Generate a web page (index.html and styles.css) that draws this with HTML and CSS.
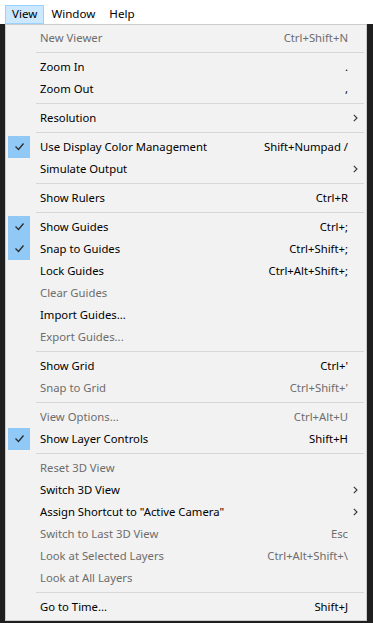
FILE: index.html
```html
<!DOCTYPE html>
<html lang="en">
<head>
    <meta charset="UTF-8">
    <meta name="viewport" content="width=device-width, initial-scale=1.0">
    <title>View Menu</title>
    <link rel="stylesheet" href="styles.css">
</head>
<body>
    <div class="menubar">
        <span class="menubar-item active">View</span>
        <span class="menubar-item">Window</span>
        <span class="menubar-item">Help</span>
    </div>
    <div class="workspace">
        <div class="menu">
            <div class="item disabled"><span class="check"></span><span class="label">New Viewer</span><span class="key">Ctrl+Shift+N</span><span class="arrow"></span></div>
            <div class="sep"></div>
            <div class="item"><span class="check"></span><span class="label">Zoom In</span><span class="key">.</span><span class="arrow"></span></div>
            <div class="item"><span class="check"></span><span class="label">Zoom Out</span><span class="key">,</span><span class="arrow"></span></div>
            <div class="sep"></div>
            <div class="item"><span class="check"></span><span class="label">Resolution</span><span class="key"></span><span class="arrow"><svg width="5" height="8" viewBox="0 0 5 8"><path d="M0.8 0.8 L4 4 L0.8 7.2"/></svg></span></div>
            <div class="sep"></div>
            <div class="item checked"><span class="check"><svg width="22" height="22" viewBox="0 0 22 22"><path d="M7.5 10.5 L10.5 13.5 L15.5 7.5"/></svg></span><span class="label">Use Display Color Management</span><span class="key">Shift+Numpad /</span><span class="arrow"></span></div>
            <div class="item"><span class="check"></span><span class="label">Simulate Output</span><span class="key"></span><span class="arrow"><svg width="5" height="8" viewBox="0 0 5 8"><path d="M0.8 0.8 L4 4 L0.8 7.2"/></svg></span></div>
            <div class="sep"></div>
            <div class="item"><span class="check"></span><span class="label">Show Rulers</span><span class="key">Ctrl+R</span><span class="arrow"></span></div>
            <div class="sep"></div>
            <div class="item checked"><span class="check"><svg width="22" height="22" viewBox="0 0 22 22"><path d="M7.5 10.5 L10.5 13.5 L15.5 7.5"/></svg></span><span class="label">Show Guides</span><span class="key">Ctrl+;</span><span class="arrow"></span></div>
            <div class="item checked"><span class="check"><svg width="22" height="22" viewBox="0 0 22 22"><path d="M7.5 10.5 L10.5 13.5 L15.5 7.5"/></svg></span><span class="label">Snap to Guides</span><span class="key">Ctrl+Shift+;</span><span class="arrow"></span></div>
            <div class="item"><span class="check"></span><span class="label">Lock Guides</span><span class="key">Ctrl+Alt+Shift+;</span><span class="arrow"></span></div>
            <div class="item disabled"><span class="check"></span><span class="label">Clear Guides</span><span class="key"></span><span class="arrow"></span></div>
            <div class="item"><span class="check"></span><span class="label">Import Guides...</span><span class="key"></span><span class="arrow"></span></div>
            <div class="item disabled"><span class="check"></span><span class="label">Export Guides...</span><span class="key"></span><span class="arrow"></span></div>
            <div class="sep"></div>
            <div class="item"><span class="check"></span><span class="label">Show Grid</span><span class="key">Ctrl+'</span><span class="arrow"></span></div>
            <div class="item disabled"><span class="check"></span><span class="label">Snap to Grid</span><span class="key">Ctrl+Shift+'</span><span class="arrow"></span></div>
            <div class="sep"></div>
            <div class="item disabled"><span class="check"></span><span class="label">View Options...</span><span class="key">Ctrl+Alt+U</span><span class="arrow"></span></div>
            <div class="item checked"><span class="check"><svg width="22" height="22" viewBox="0 0 22 22"><path d="M7.5 10.5 L10.5 13.5 L15.5 7.5"/></svg></span><span class="label">Show Layer Controls</span><span class="key">Shift+H</span><span class="arrow"></span></div>
            <div class="sep"></div>
            <div class="item disabled"><span class="check"></span><span class="label">Reset 3D View</span><span class="key"></span><span class="arrow"></span></div>
            <div class="item"><span class="check"></span><span class="label">Switch 3D View</span><span class="key"></span><span class="arrow"><svg width="5" height="8" viewBox="0 0 5 8"><path d="M0.8 0.8 L4 4 L0.8 7.2"/></svg></span></div>
            <div class="item"><span class="check"></span><span class="label">Assign Shortcut to "Active Camera"</span><span class="key"></span><span class="arrow"><svg width="5" height="8" viewBox="0 0 5 8"><path d="M0.8 0.8 L4 4 L0.8 7.2"/></svg></span></div>
            <div class="item disabled"><span class="check"></span><span class="label">Switch to Last 3D View</span><span class="key">Esc</span><span class="arrow"></span></div>
            <div class="item disabled"><span class="check"></span><span class="label">Look at Selected Layers</span><span class="key">Ctrl+Alt+Shift+\</span><span class="arrow"></span></div>
            <div class="item disabled"><span class="check"></span><span class="label">Look at All Layers</span><span class="key"></span><span class="arrow"></span></div>
            <div class="sep"></div>
            <div class="item"><span class="check"></span><span class="label">Go to Time...</span><span class="key">Shift+J</span><span class="arrow"></span></div>
        </div>
    </div>
</body>
</html>
```

FILE: styles.css
```css
* {
    margin: 0;
    padding: 0;
    box-sizing: border-box;
}

body {
    font-family: 'Noto Sans', 'Liberation Sans', sans-serif;
    font-size: 11.3px;
    background-color: #1f1f1f;
    color: #000;
    width: 373px;
    height: 623px;
    overflow: hidden;
}

.menubar {
    background: #fff;
    height: 24px;
    padding: 5px 0 0 5px;
    display: flex;
}

.menubar-item {
    height: 19px;
    line-height: 16px;
    padding: 0 6px;
    border: 1px solid transparent;
    font-size: 11.6px;
}

.menubar-item.active {
    background: #cce8ff;
    border-color: #99d1ff;
}

.workspace {
    padding-left: 5px;
}

.menu {
    width: 362px;
    background: #f2f2f2;
    border: 1px solid #cccccc;
    padding: 2px;
}

.item {
    display: flex;
    align-items: center;
    height: 22px;
}

.item.disabled {
    color: #6d6d6d;
}

.check {
    width: 22px;
    height: 22px;
    flex: none;
}

.item.checked .check {
    background: #90c8f6;
}

.check svg path {
    fill: none;
    stroke: #2b2b2b;
    stroke-width: 1.3;
}

.label {
    flex: 1;
    padding-left: 10px;
    padding-bottom: 1px;
    white-space: nowrap;
}

.key {
    text-align: right;
    padding-bottom: 1px;
    white-space: nowrap;
}

.arrow {
    width: 16px;
    flex: none;
    display: flex;
    align-items: center;
    padding-left: 5px;
}

.arrow svg path {
    fill: none;
    stroke: #333;
    stroke-width: 1.1;
}

.sep {
    height: 7px;
    padding-top: 3px;
    margin-left: 28px;
}

.sep::before {
    content: "";
    display: block;
    height: 1px;
    background: #d7d7d7;
}
```
